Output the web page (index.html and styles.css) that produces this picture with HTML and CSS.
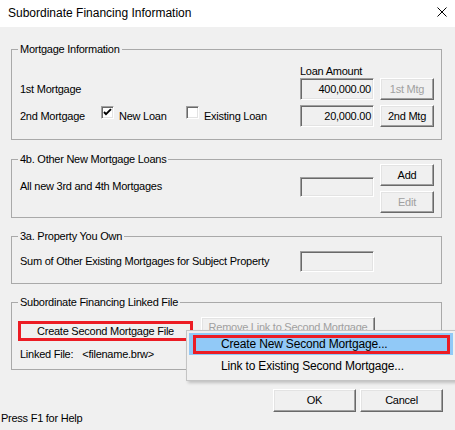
FILE: index.html
```html
<!DOCTYPE html>
<html>
<head>
<meta charset="utf-8">
<title>Subordinate Financing Information</title>
<link rel="stylesheet" href="styles.css">
</head>
<body>
<div class="window">
  <div class="titlebar">
    <span class="title">Subordinate Financing Information</span>
    <svg class="close" width="10" height="10" viewBox="0 0 10 10"><path d="M0.5 0.5L9.5 9.5M9.5 0.5L0.5 9.5" stroke="#000" stroke-width="1" fill="none"/></svg>
  </div>

  <div class="client">
    <section class="group g-mortgage">
      <div class="legend">Mortgage Information</div>
      <div class="head-row"><span class="col-head">Loan Amount</span></div>
      <div class="row">
        <span class="label">1st Mortgage</span>
        <span class="field">400,000.00</span>
        <button class="btn btn-sm" disabled>1st Mtg</button>
      </div>
      <div class="row">
        <span class="label label-fixed">2nd Mortgage</span>
        <label class="check check-new"><span class="box"><svg width="9" height="9" viewBox="0 0 9 9"><path d="M1 4 L3 6.2 L8 1.2" stroke="#000" stroke-width="1.9" fill="none"/></svg></span><span class="check-text">New Loan</span></label>
        <label class="check"><span class="box"></span><span class="check-text">Existing Loan</span></label>
        <span class="spacer"></span>
        <span class="field">20,000.00</span>
        <button class="btn btn-sm">2nd Mtg</button>
      </div>
    </section>

    <section class="group g-other">
      <div class="legend">4b. Other New Mortgage Loans</div>
      <div class="other-body">
        <span class="label other-label">All new 3rd and 4th Mortgages</span>
        <span class="field field-short other-field"></span>
        <div class="btn-col">
          <button class="btn btn-sm">Add</button>
          <button class="btn btn-sm" disabled>Edit</button>
        </div>
      </div>
    </section>

    <section class="group g-property">
      <div class="legend">3a. Property You Own</div>
      <div class="prop-row">
        <span class="label">Sum of Other Existing Mortgages for Subject Property</span>
        <span class="field field-prop"></span>
      </div>
    </section>

    <section class="group g-linked">
      <div class="legend">Subordinate Financing Linked File</div>
      <div class="linked-btns">
        <button class="btn btn-create">Create Second Mortgage File</button>
        <button class="btn btn-remove" disabled>Remove Link to Second Mortgage</button>
      </div>
      <div class="linked-file"><span>Linked File:</span><span class="file-name">&lt;filename.brw&gt;</span></div>
    </section>
  </div>

  <div class="actions">
    <button class="btn btn-action">OK</button>
    <button class="btn btn-action">Cancel</button>
  </div>
  <div class="status">Press F1 for Help</div>

  <div class="menu">
    <div class="menu-item active">Create New Second Mortgage...</div>
    <div class="menu-item">Link to Existing Second Mortgage...</div>
  </div>
</div>
</body>
</html>
```
FILE: styles.css
```css
* { box-sizing: border-box; }

body {
  margin: 0;
  width: 455px;
  height: 430px;
  overflow: hidden;
  background: #f0f0f0;
  font: 11px/13px "Liberation Sans", Arial, sans-serif;
  letter-spacing: -0.25px;
  color: #000;
}

.window {
  position: relative;
  width: 455px;
  height: 430px;
}

button {
  font: inherit;
  letter-spacing: inherit;
  color: #000;
  padding: 0;
  margin: 0;
}

.titlebar {
  height: 27px;
  background: #fff;
  display: flex;
  align-items: center;
  justify-content: space-between;
  padding: 0 8px;
}

.title {
  font-size: 12px;
  line-height: 15px;
  letter-spacing: 0;
}

.close {
  align-self: flex-start;
  margin-top: 7px;
}

.client {
  padding: 0 13px 0 11px;
}

.group {
  border: 1px solid #a9a9a9;
  padding: 0 7px 0 8px;
}

.legend {
  margin: -7px 0 0 -2px;
  padding: 0 2px;
  background: #f0f0f0;
  width: max-content;
  line-height: 13px;
}

.g-mortgage { margin-top: 22px; padding-bottom: 12px; }
.g-other { margin-top: 19px; padding-bottom: 4px; }
.g-property { margin-top: 18px; padding-bottom: 11px; }
.g-linked { margin-top: 18px; padding-bottom: 8px; }

.head-row {
  display: flex;
  justify-content: flex-end;
  margin-top: 9px;
  padding-right: 60px;
}

.col-head { width: 74px; }

.row {
  display: flex;
  align-items: center;
  height: 22px;
}

.row + .row { margin-top: 5px; }

.label { flex: 1; }
.label-fixed { flex: none; width: 81px; }
.spacer { flex: 1; }

.check {
  align-self: stretch;
  display: flex;
  align-items: flex-start;
  gap: 5px;
  padding-top: 1px;
}

.check-new { width: 85px; }

.check-text { margin-top: 4px; }

.box {
  width: 13px;
  height: 13px;
  background: #fff;
  border: 1px solid;
  border-color: #a0a0a0 #fff #fff #a0a0a0;
  box-shadow: inset 1px 1px #696969, inset -1px -1px #e3e3e3;
  display: flex;
  align-items: center;
  justify-content: center;
}

.field {
  width: 74px;
  height: 22px;
  margin-right: 6px;
  border: 1px solid;
  border-color: #a0a0a0 #fff #fff #a0a0a0;
  box-shadow: inset 1px 1px #696969, inset -1px -1px #e3e3e3;
  background: #f0f0f0;
  text-align: right;
  padding-right: 2px;
  line-height: 20px;
}

.btn {
  background: #f0f0f0;
  border: 1px solid;
  border-color: #fff #696969 #696969 #fff;
  box-shadow: inset -1px -1px #a0a0a0, inset 1px 1px #e3e3e3;
  text-align: center;
}

.btn:disabled { color: #a0a0a0; }

.btn-sm {
  width: 54px;
  height: 22px;
}

.other-body {
  display: flex;
  align-items: flex-start;
  margin-top: -2px;
}

.other-label { margin-top: 16px; }

.field-short { height: 20px; line-height: 18px; }

.other-field { margin-top: 13px; }

.btn-col {
  display: flex;
  flex-direction: column;
  gap: 5px;
}

.prop-row {
  display: flex;
  align-items: center;
  margin-top: 8px;
}

.field-prop {
  height: 21px;
  margin-right: 60px;
}

.linked-btns {
  display: flex;
  align-items: flex-start;
  margin-top: 8px;
}

.btn-create {
  width: 175px;
  height: 20px;
  margin: 4px 0 0 -2px;
  border: 3px solid #ec1c24;
  box-shadow: none;
  line-height: 14px;
}

.btn-remove {
  width: 174px;
  height: 21px;
  margin-left: 8px;
}

.linked-file {
  margin-top: 7px;
  display: flex;
}

.file-name { margin-left: 9px; }

.actions {
  display: flex;
  justify-content: flex-end;
  gap: 4px;
  margin-top: 19px;
  padding-right: 12px;
}

.btn-action {
  width: 83px;
  height: 23px;
}

.status {
  padding-left: 1px;
  line-height: 13px;
}

.menu {
  position: absolute;
  left: 186px;
  top: 330px;
  width: 270px;
  padding: 2px 2px 3px;
  background: #f0f0f0;
  border: 1px solid #c4c4c4;
  box-shadow: 2px 2px 3px rgba(0, 0, 0, 0.2);
  font-size: 12px;
  letter-spacing: -0.17px;
}

.menu-item {
  position: relative;
  height: 22px;
  line-height: 22px;
  padding-left: 32px;
}

.menu-item.active { background: #91c9f7; }

.menu-item.active::after {
  content: "";
  position: absolute;
  inset: 2px 3px 1px 4px;
  border: 3px solid #ec1c24;
}
```
